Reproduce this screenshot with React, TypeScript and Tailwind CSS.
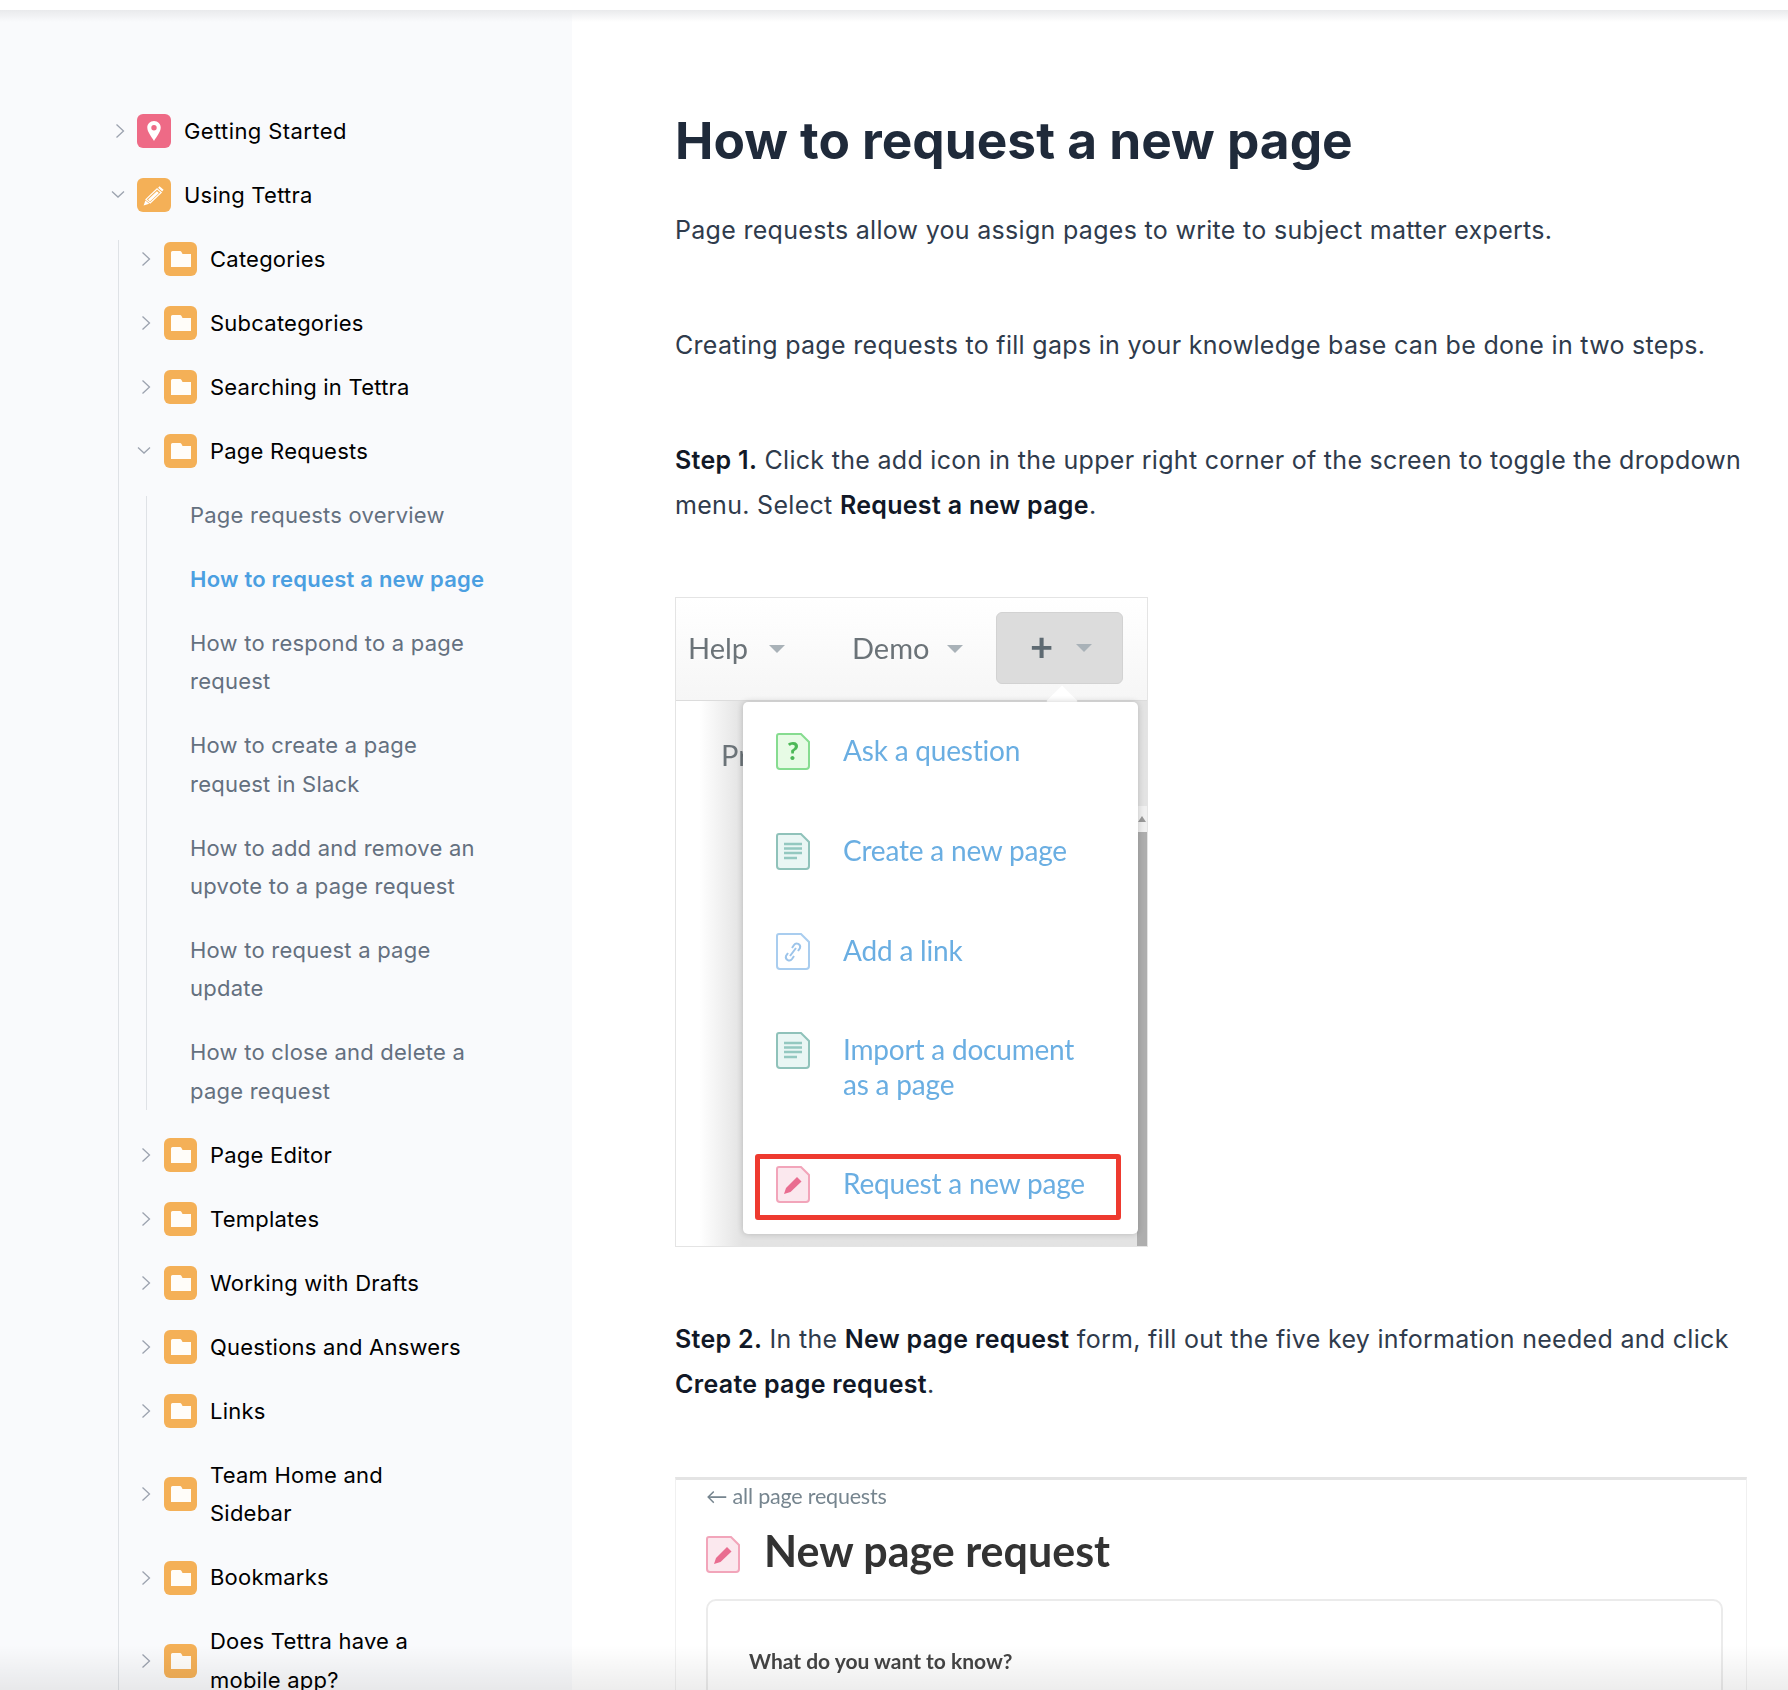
import React from 'react';

const Chevron = ({ open }: { open?: boolean }) =>
  open ? (
    <svg width="16" height="16" viewBox="0 0 16 16" className="-translate-x-[2px] -translate-y-[1px]" fill="none" stroke="#9ca3af" strokeWidth="1.3">
      <path d="M2 5.5 L8 11 L14 5.5" />
    </svg>
  ) : (
    <svg width="16" height="16" viewBox="0 0 16 16" fill="none" stroke="#9ca3af" strokeWidth="1.3">
      <path d="M4.5 1.5 L11.5 8 L4.5 14.5" />
    </svg>
  );

const FolderIcon = () => (
  <div className="w-[33px] h-[34px] shrink-0 rounded-[6px] bg-[#f4b057] flex items-center justify-center">
    <svg width="20" height="16" viewBox="0 0 20 16">
      <path d="M0 1.5 Q0 0 1.5 0 H9 Q10 0 10.5 1 L11.5 3 H20 V16 H0 Z" fill="#fffdf9" />
    </svg>
  </div>
);

const PinIcon = () => (
  <div className="w-[34px] h-[34px] shrink-0 rounded-[6px] bg-[#ee6a86] flex items-center justify-center">
    <svg width="14" height="20" viewBox="0 0 14 20">
      <path fillRule="evenodd" d="M7 0 C3 0 0.3 3 0.3 6.6 C0.3 11 4.5 16 7 20 C9.5 16 13.7 11 13.7 6.6 C13.7 3 11 0 7 0 Z M7 4 A2.7 2.7 0 1 1 7 9.4 A2.7 2.7 0 1 1 7 4 Z" fill="#fff" />
    </svg>
  </div>
);

const PencilIcon = () => (
  <div className="w-[34px] h-[34px] shrink-0 rounded-[6px] bg-[#f4b057] flex items-center justify-center">
    <svg width="22" height="21" viewBox="0 0 22 21" fill="#fff">
      <path d="M16.5 1.2 L20.6 4.8 L19.2 6.4 L15.1 2.8 Z" />
      <path d="M14.1 3.9 L18.2 7.5 L7.2 18 L3 14.4 Z" fill="none" stroke="#fff" strokeWidth="1.2" />
      <path d="M13.9 6.3 L15.9 8 L7 16.4 L5.1 14.6 Z" />
      <path d="M2.4 15.4 L6.2 18.7 L0.6 20.6 Z" />
    </svg>
  </div>
);

const DocIcon = ({ bg, line, children }: { bg: string; line: string; children: React.ReactNode }) => (
  <svg width="34" height="37" viewBox="0 0 34 37" className="shrink-0">
    <path d="M3 1 H25 L33 9 V33 Q33 36 30 36 H4 Q1 36 1 33 V3 Q1 1 3 1 Z" fill={bg} stroke={line} strokeWidth="2" />
    {children}
  </svg>
);

const TextDoc = () => (
  <DocIcon bg="#e9f6f4" line="#8fc2ba">
    <path d="M8 11 H26 M8 15.5 H26 M8 20 H26 M8 25 H21" stroke="#93c8c0" strokeWidth="2.6" />
  </DocIcon>
);

const EditDoc = () => (
  <DocIcon bg="#fbe8ee" line="#f2a5ba">
    <path d="M8 28 L10 22 L21 11 L25.5 15.5 L14.5 26 Z" fill="#e96d90" />
  </DocIcon>
);

const Caret = ({ className }: { className?: string }) => (
  <span className={`block w-0 h-0 border-x-[8px] border-x-transparent border-t-[8px] border-t-[#a9b2b8] ${className ?? ''}`} />
);

const MenuRow = ({ icon, children, className }: { icon: React.ReactNode; children: React.ReactNode; className?: string }) => (
  <div className={`flex items-start gap-[33px] pl-[33px] ${className ?? ''}`}>
    {icon}
    <div className="text-[28px] leading-[35px] tracking-[-0.2px] text-[#6aaee2]">{children}</div>
  </div>
);

const folders1 = ['Categories', 'Subcategories', 'Searching in Tettra'];
const folders2 = ['Page Editor', 'Templates', 'Working with Drafts', 'Questions and Answers', 'Links', 'Team Home and Sidebar', 'Bookmarks', 'Does Tettra have a mobile app?'];

const leaves = [
  'Page requests overview',
  'How to request a new page',
  'How to respond to a page request',
  'How to create a page request in Slack',
  'How to add and remove an upvote to a page request',
  'How to request a page update',
  'How to close and delete a page request',
];

const FolderRow = ({ label, open }: { label: string; open?: boolean }) => (
  <div className="flex items-center pl-[19px]">
    <div className="w-[16px] shrink-0"><Chevron open={open} /></div>
    <div className="ml-[10px]"><FolderIcon /></div>
    <span className="ml-[13px] w-[255px] text-black">{label}</span>
  </div>
);

export default function App() {
  return (
    <div className="relative w-[1788px] h-[1690px] overflow-hidden bg-white font-['Inter',sans-serif] text-[22px] leading-[38.5px]">
      <div className="h-[10px] bg-white" />

      <div className="flex h-[1680px]">
        {/* sidebar */}
        <aside className="w-[572px] shrink-0 bg-[#f9fafc] pl-[112px] pt-[102px] tracking-[0.23px]">
          <div className="flex items-center">
            <div className="w-[16px] shrink-0"><Chevron /></div>
            <div className="ml-[9px]"><PinIcon /></div>
            <span className="ml-[13px] text-black tracking-[0.4px]">Getting Started</span>
          </div>
          <div className="flex items-center mt-[25.5px]">
            <div className="w-[16px] shrink-0"><Chevron open /></div>
            <div className="ml-[9px]"><PencilIcon /></div>
            <span className="ml-[13px] text-black">Using Tettra</span>
          </div>

          <div className="ml-[6px] mt-[25.5px] border-l border-[#dfe2e6] flex flex-col gap-[25.5px]">
            {folders1.map((f) => <FolderRow key={f} label={f} />)}
            <FolderRow label="Page Requests" open />
            <div className="ml-[27px] border-l border-[#dfe2e6] pl-[43px] flex flex-col gap-[25.4px]">
              {leaves.map((l, i) => (
                <div key={l} className={i === 1 ? 'w-[295px] font-semibold text-[#4b9fe1]' : 'w-[295px] text-[#64707f]'}>{l}</div>
              ))}
            </div>
            {folders2.map((f) => <FolderRow key={f} label={f} />)}
          </div>
        </aside>

        {/* article */}
        <main className="flex-1 pl-[103px] pt-[100px]">
          <div className="w-[1072px] text-[25px] tracking-[0.3px] leading-[45px] text-[#2f3b4c] flex flex-col gap-[70px]">
            <div>
              <h1 className="text-[51.4px] tracking-normal leading-[60px] font-bold text-[#1f2a3a] mb-[38px]">How to request a new page</h1>
              <p>Page requests allow you assign pages to write to subject matter experts.</p>
            </div>
            <p>Creating page requests to fill gaps in your knowledge base can be done in two steps.</p>
            <p>
              <b className="font-semibold text-[#111827]">Step 1.</b> Click the add icon in the upper right corner of the screen to toggle the dropdown menu. Select <b className="font-semibold text-[#111827]">Request a new page</b>.
            </p>

            {/* screenshot: dropdown menu */}
            <div className="relative -mt-[1px] w-[473px] h-[650px] shrink-0 border border-[#e4e4e4] overflow-hidden font-['Lato',sans-serif] tracking-normal blur-[0.4px]">
              <div className="h-[103px] flex items-center border-b border-[#dcdcdc] bg-gradient-to-b from-white to-[#f6f6f6] pl-[12px]">
                <span className="text-[29px] leading-none text-[#6b7378] w-[61px] mb-[3px]">Help</span>
                <Caret className="ml-[20px]" />
                <span className="ml-[67px] text-[29px] leading-none text-[#6b7378] w-[74px] mb-[3px]">Demo</span>
                <Caret className="ml-[21px]" />
                <div className="ml-[33px] w-[127px] h-[72px] mb-[3px] rounded-[6px] bg-[#dcdcdc] border border-[#d2d2d2] flex items-center pl-[33px]">
                  <span className="text-[40px] leading-none font-bold text-[#5e6a72] mb-[4px]">+</span>
                  <Caret className="ml-[23px]" />
                </div>
              </div>
              <div className="h-[547px] pl-[45px] pt-[33px] bg-gradient-to-r from-white from-[5%] to-[#e3e3e3] to-[14%]">
                <span className="text-[29px] leading-[36px] text-[#6b7378]">Pr</span>
              </div>

              {/* scrollbar */}
              <div className="absolute right-0 top-[208px] bottom-0 w-[10px] bg-[#f0f0f0]">
                <div className="w-0 h-0 mx-auto mt-[10px] border-x-[4px] border-x-transparent border-b-[6px] border-b-[#9a9a9a]" />
                <div className="absolute inset-x-0 top-[26px] bottom-0 bg-[#aeaeae]" />
              </div>

              {/* arrow and menu over the page */}
              <div className="absolute left-[375px] top-[92px] w-[22px] h-[22px] rotate-45 bg-white" />
              <div className="absolute left-[67px] top-[104px] w-[395px] h-[532px] rounded-[5px] bg-white shadow-[0_0_6px_rgba(0,0,0,0.2)] pt-[31px] flex flex-col">
                <MenuRow icon={<DocIcon bg="#e7fbe5" line="#86dc90"><text x="17" y="27" textAnchor="middle" fontSize="25" fontWeight="900" fontFamily="Lato" fill="#4cb857">?</text></DocIcon>}>Ask a question</MenuRow>
                <MenuRow className="mt-[63px]" icon={<TextDoc />}>Create a new page</MenuRow>
                <MenuRow className="mt-[63px]" icon={
                  <DocIcon bg="#ffffff" line="#a9cdef">
                    <path d="M14 23 L20 15 M12 20 l-2 3 a3.4 3.4 0 0 0 6 3 l2 -3 M22 18 l2 -3 a3.4 3.4 0 0 0 -6 -3 l-2 3" stroke="#9cc4ea" strokeWidth="2" fill="none" />
                  </DocIcon>
                }>Add a link</MenuRow>
                <MenuRow className="mt-[62px]" icon={<TextDoc />}>Import a document<br />as a page</MenuRow>
                <div className="ml-[12px] mt-[52px] w-[366px] h-[66px] border-[5px] border-[#ee3a2f] rounded-[3px] flex items-center pb-[5px]">
                  <MenuRow className="-ml-[17px]" icon={<EditDoc />}>Request a new page</MenuRow>
                </div>
              </div>
            </div>

            <p>
              <b className="font-semibold text-[#111827]">Step 2.</b> In the <b className="font-semibold text-[#111827]">New page request</b> form, fill out the five key information needed and click <b className="font-semibold text-[#111827]">Create page request</b>.
            </p>

            {/* screenshot: new page request form */}
            <div className="w-[1072px] h-[400px] shrink-0 border-t-[3px] border-x border-t-[#e4e4e4] border-x-[#f0f0f0] pl-[30px] pr-[23px] font-['Lato',sans-serif] tracking-normal blur-[0.3px]">
              <div className="text-[21.5px] leading-[32px] text-[#76858f] tracking-[-0.2px]">← all page requests</div>
              <div className="flex items-center gap-[24px] mt-[19px]">
                <EditDoc />
                <h2 className="text-[43px] leading-[52px] -mt-[6px] font-bold text-[#333333]">New page request</h2>
              </div>
              <div className="mt-[22px] h-[200px] rounded-[10px] border-2 border-[#ebebeb] pl-[41px] pt-[36px]">
                <span className="text-[21px] leading-[32px] font-bold text-[#444444]">What do you want to know?</span>
              </div>
            </div>
          </div>
        </main>
      </div>

      {/* shadow under the top bar and fade at the bottom */}
      <div className="absolute inset-x-0 top-[10px] h-[12px] bg-gradient-to-b from-[#e9eaec] to-transparent" />
      <div className="absolute inset-x-0 bottom-0 h-[45px] bg-gradient-to-b from-transparent to-[#00000012]" />
    </div>
  );
}
